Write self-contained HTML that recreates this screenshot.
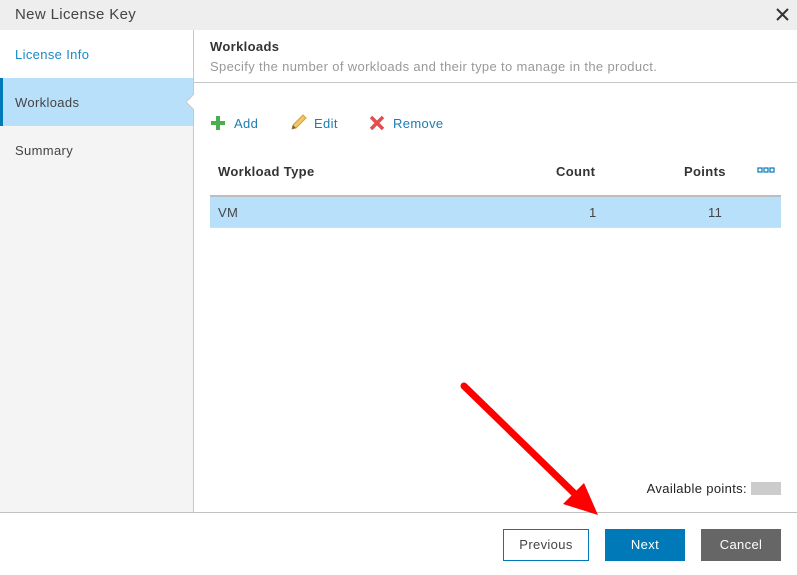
<!DOCTYPE html>
<html><head><style>
*{margin:0;padding:0;box-sizing:border-box}
body{width:797px;height:575px;position:relative;font-family:"Liberation Sans",sans-serif;font-size:13px;letter-spacing:0.35px;color:#333;background:#fff;overflow:hidden}
.a{position:absolute}
</style></head><body>
<div class="a" style="left:0;top:0;width:797px;height:30px;background:#eeeeee"></div>
<div class="a" style="left:15px;top:6px;font-size:15px;color:#444">New License Key</div>
<svg class="a" style="left:776px;top:8px" width="13" height="13"><path d="M1 1L12 12M12 1L1 12" stroke="#333" stroke-width="2"/></svg>
<div class="a" style="left:0;top:30px;width:193px;height:482px;background:#f4f4f4"></div>
<div class="a" style="left:0;top:30px;width:193px;height:48px;background:#fff"></div>
<div class="a" style="left:193px;top:30px;width:1px;height:482px;background:#c8c8c8"></div>
<div class="a" style="left:15px;top:47px;color:#1a8ac6">License Info</div>
<div class="a" style="left:0;top:78px;width:193px;height:48px;background:#b9e0fb"></div>
<div class="a" style="left:0;top:78px;width:3px;height:48px;background:#0079b8"></div>
<svg class="a" style="left:186px;top:94px" width="10" height="16"><path d="M8 0 L0 8 L8 16" fill="#fff" stroke="#c8c8c8"/></svg>
<div class="a" style="left:15px;top:95px;color:#444">Workloads</div>
<div class="a" style="left:15px;top:143px;color:#444">Summary</div>
<div class="a" style="left:210px;top:39px;font-weight:bold;color:#333">Workloads</div>
<div class="a" style="left:210px;top:59px;color:#999">Specify the number of workloads and their type to manage in the product.</div>
<div class="a" style="left:194px;top:82px;width:603px;height:1px;background:#c8c8c8"></div>
<svg class="a" style="left:211px;top:116px" width="14" height="14"><path d="M5 0h4v5h5v4H9v5H5V9H0V5h5z" fill="#4cae4c"/></svg>
<div class="a" style="left:234px;top:116px;color:#1a7db5">Add</div>
<svg class="a" style="left:290px;top:114px" width="17" height="17"><path d="M2 15 L3 11 L13 1 L16 4 L6 14 Z" fill="#f3c66b" stroke="#d9a030"/><path d="M2 15 L3 11 L6 14Z" fill="#666"/></svg>
<div class="a" style="left:314px;top:116px;color:#1a7db5">Edit</div>
<svg class="a" style="left:369px;top:115px" width="16" height="16"><path d="M2 2L14 14M14 2L2 14" stroke="#e04e4e" stroke-width="3.5"/></svg>
<div class="a" style="left:393px;top:116px;color:#1a7db5">Remove</div>
<div class="a" style="left:218px;top:164px;font-weight:bold">Workload Type</div>
<div class="a" style="left:556px;top:164px;font-weight:bold">Count</div>
<div class="a" style="left:684px;top:164px;font-weight:bold">Points</div>
<svg class="a" style="left:757px;top:167px" width="18" height="6"><g fill="none" stroke="#0079b8" stroke-width="1.2"><rect x="1" y="1" width="4" height="4"/><rect x="7" y="1" width="4" height="4"/><rect x="13" y="1" width="4" height="4"/></g></svg>
<div class="a" style="left:210px;top:195px;width:571px;height:2px;background:#bdbdbd"></div>
<div class="a" style="left:210px;top:197px;width:571px;height:31px;background:#b9e0fb;border-bottom:1px solid #ddd"></div>
<div class="a" style="left:218px;top:205px;color:#444">VM</div>
<div class="a" style="left:589px;top:205px;color:#444">1</div>
<div class="a" style="left:708px;top:205px;color:#444">11</div>
<div class="a" style="right:50px;top:481px;color:#222;white-space:nowrap">Available points:</div>
<div class="a" style="left:751px;top:482px;width:30px;height:13px;background:#ccc"></div>
<div class="a" style="left:0;top:512px;width:797px;height:1px;background:#c0c0c0"></div>
<div class="a" style="left:503px;top:529px;width:86px;height:32px;border:1px solid #0079b8;text-align:center;line-height:30px;color:#444">Previous</div>
<div class="a" style="left:605px;top:529px;width:80px;height:32px;background:#0079b8;color:#fff;text-align:center;line-height:32px">Next</div>
<div class="a" style="left:701px;top:529px;width:80px;height:32px;background:#666;color:#fff;text-align:center;line-height:32px">Cancel</div>
<svg class="a" style="left:0;top:0" width="797" height="575"><line x1="464" y1="386" x2="576" y2="495" stroke="#f00" stroke-width="7" stroke-linecap="round"/><path d="M598 515 L584 483 L563 504 Z" fill="#f00"/></svg>
</body></html>
